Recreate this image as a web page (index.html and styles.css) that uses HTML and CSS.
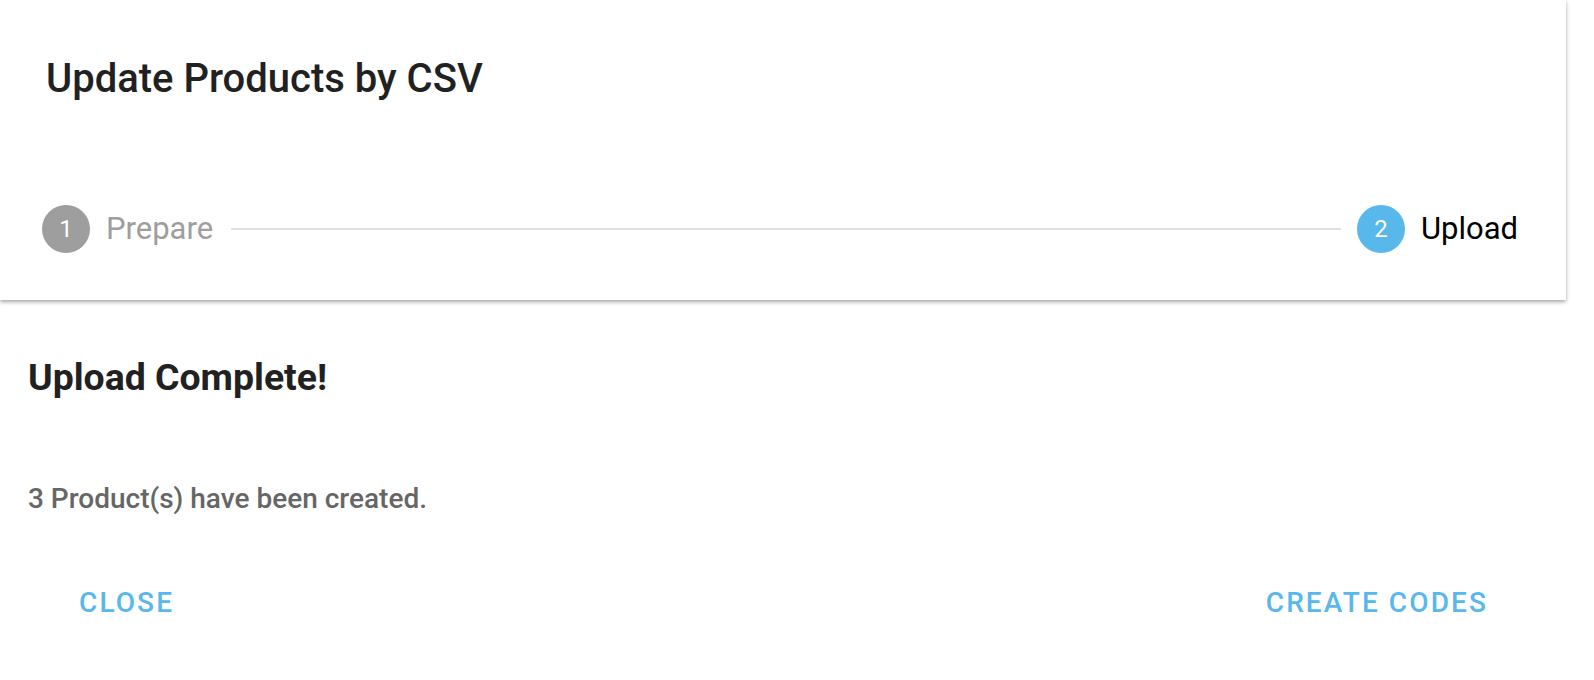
FILE: index.html
```html
<!DOCTYPE html>
<html lang="en">
<head>
<meta charset="utf-8">
<title>Update Products by CSV</title>
<link rel="stylesheet" href="styles.css">
</head>
<body>
<div class="dialog">
  <header class="head">
    <h1 class="title">Update Products by CSV</h1>
    <div class="stepper">
      <div class="step">
        <span class="dot dot-done">1</span>
        <span class="label label-inactive">Prepare</span>
      </div>
      <div class="connector"></div>
      <div class="step">
        <span class="dot dot-active">2</span>
        <span class="label label-active">Upload</span>
      </div>
    </div>
  </header>
  <main class="content">
    <h2 class="heading">Upload Complete!</h2>
    <p class="message">3 Product(s) have been created.</p>
  </main>
  <footer class="actions">
    <button class="btn">CLOSE</button>
    <button class="btn">CREATE CODES</button>
  </footer>
</div>
</body>
</html>
```

FILE: styles.css
```css
* { box-sizing: border-box; }
html, body {
  margin: 0;
  padding: 0;
  background: #ffffff;
  font-family: Roboto, "Noto Sans", Arial, sans-serif;
}
.dialog {
  width: 1594px;
  height: 680px;
  overflow: hidden;
  background: #fff;
}
.head {
  width: 1566px;
  height: 300px;
  padding: 55px 48px 0 42px;
  background: #fff;
  box-shadow: 0 2px 4px rgba(0, 0, 0, 0.35);
  position: relative;
}
.title {
  margin: 0 0 0 4px;
  font-size: 40px;
  line-height: 48px;
  font-weight: 500;
  color: #212121;
}
.stepper {
  margin-top: 102px;
  height: 48px;
  display: flex;
  align-items: center;
}
.step {
  display: flex;
  align-items: center;
  gap: 16px;
}
.dot {
  width: 48px;
  height: 48px;
  border-radius: 50%;
  display: flex;
  align-items: center;
  justify-content: center;
  color: #fff;
  font-size: 24px;
}
.dot-done { background: #9e9e9e; }
.dot-active { background: #58b7eb; }
.label {
  font-size: 31px;
  line-height: 48px;
}
.label-inactive { color: #9e9e9e; }
.label-active { color: #000; }
.connector {
  flex: 1;
  height: 2px;
  background: #e0e0e0;
  margin: 0 16px 0 18px;
}
.content {
  padding: 55px 28px 0 28px;
}
.heading {
  margin: 0;
  font-size: 37.4px;
  line-height: 44px;
  font-weight: 700;
  color: #212121;
}
.message {
  margin: 82px 0 0 0;
  font-size: 28px;
  line-height: 36px;
  font-weight: 500;
  color: #666666;
}
.actions {
  margin-top: 68px;
  display: flex;
  justify-content: space-between;
  padding: 0 106px 0 79px;
}
.btn {
  border: 0;
  background: transparent;
  padding: 0;
  font-family: inherit;
  font-size: 28px;
  line-height: 36px;
  font-weight: 500;
  letter-spacing: 2.1px;
  color: #58b7eb;
  cursor: pointer;
}
```
